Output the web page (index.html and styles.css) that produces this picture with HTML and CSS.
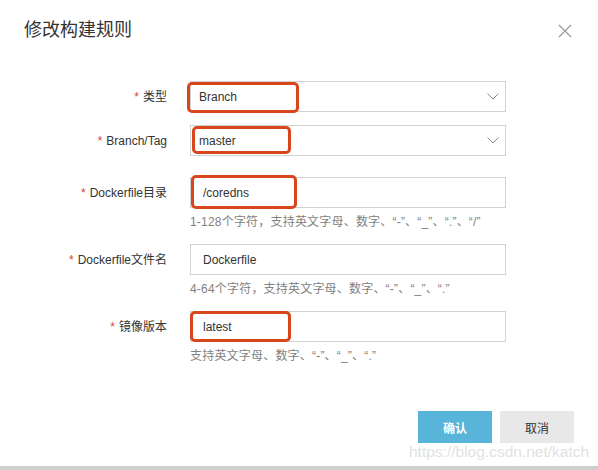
FILE: index.html
```html
<!DOCTYPE html>
<html lang="zh-CN">
<head>
<meta charset="utf-8">
<title>修改构建规则</title>
<link rel="stylesheet" href="styles.css">
</head>
<body>
<div class="dialog">
  <div class="header">
    <h2 class="title">修改构建规则</h2>
    <span class="close" aria-label="关闭">
      <svg width="14" height="14" viewBox="0 0 14 14"><path d="M1 1L13 13M13 1L1 13" stroke="#9a9a9a" stroke-width="1.2" fill="none"/></svg>
    </span>
  </div>
  <form class="form">
    <div class="row">
      <label class="label"><span class="req">*</span>类型</label>
      <div class="control">
        <div class="field select"><span>Branch</span>
          <svg class="arrow" width="12" height="7" viewBox="0 0 12 7"><path d="M0.5 0.5L6 6L11.5 0.5" stroke="#8a8a8a" stroke-width="1" fill="none"/></svg>
        </div>
        <span class="mark mark-1"></span>
      </div>
    </div>
    <div class="row row-wide">
      <label class="label"><span class="req">*</span>Branch/Tag</label>
      <div class="control">
        <div class="field select"><span>master</span>
          <svg class="arrow" width="12" height="7" viewBox="0 0 12 7"><path d="M0.5 0.5L6 6L11.5 0.5" stroke="#8a8a8a" stroke-width="1" fill="none"/></svg>
        </div>
        <span class="mark mark-2"></span>
      </div>
    </div>
    <div class="row">
      <label class="label"><span class="req">*</span>Dockerfile目录</label>
      <div class="control">
        <div class="field input">/coredns</div>
        <span class="mark mark-3"></span>
      </div>
      <div class="hint">1-128个字符，支持英文字母、数字、“-”、“_”、“.”、“/”</div>
    </div>
    <div class="row">
      <label class="label"><span class="req">*</span>Dockerfile文件名</label>
      <div class="control">
        <div class="field input">Dockerfile</div>
      </div>
      <div class="hint">4-64个字符，支持英文字母、数字、“-”、“_”、“.”</div>
    </div>
    <div class="row">
      <label class="label"><span class="req">*</span>镜像版本</label>
      <div class="control">
        <div class="field input">latest</div>
        <span class="mark mark-5"></span>
      </div>
      <div class="hint">支持英文字母、数字、“-”、“_”、“.”</div>
    </div>
  </form>
  <div class="footer">
    <button class="btn btn-primary" type="button">确认</button>
    <button class="btn btn-default" type="button">取消</button>
  </div>
  <div class="watermark">https://blog.csdn.net/katch</div>
</div>
</body>
</html>
```
FILE: styles.css
```css
* { box-sizing: border-box; }

html, body {
  margin: 0;
  padding: 0;
}

body {
  background: #cfcfcf;
  font-family: "Liberation Sans", "Noto Sans CJK SC", sans-serif;
  color: #333;
  width: 598px;
  height: 470px;
  overflow: hidden;
}

.dialog {
  position: relative;
  background: #fff;
  width: 598px;
  height: 466px;
  padding: 0 24px 0 0;
}

.header {
  display: flex;
  align-items: center;
  justify-content: space-between;
  padding: 19px 2px 0 24px;
  height: 41px;
}

.title {
  margin: 0;
  font-size: 18px;
  line-height: 22px;
  font-weight: normal;
  color: #333;
}

.close {
  display: flex;
  width: 14px;
  height: 14px;
  margin-top: 1px;
}

.form {
  margin: 40px 0 0 0;
}

.row {
  display: grid;
  grid-template-columns: 167px 316px;
  column-gap: 23px;
  margin-bottom: 13px;
}

.row-wide {
  margin-bottom: 21px;
}

.label {
  grid-column: 1;
  grid-row: 1;
  align-self: center;
  text-align: right;
  font-size: 12px;
  line-height: 16px;
  color: #333;
}

.req {
  color: #d9403a;
  margin-right: 4px;
}

.control {
  grid-column: 2;
  grid-row: 1;
  position: relative;
}

.field {
  height: 31px;
  border: 1px solid #d2d2d2;
  font-size: 12px;
  color: #333;
  display: flex;
  align-items: center;
  background: #fff;
}

.select {
  padding: 0 6px 0 8px;
  justify-content: space-between;
}

.input {
  padding: 0 12px;
}

.arrow {
  display: block;
}

.hint {
  grid-column: 2;
  grid-row: 2;
  margin-top: 5px;
  font-size: 12px;
  line-height: 18px;
  letter-spacing: 0.2px;
  color: #7f7f7f;
  white-space: nowrap;
}

.mark {
  position: absolute;
  border: 3px solid #d8461b;
  border-radius: 5px;
  pointer-events: none;
}

.mark-1 { left: -3px; top: 1px; width: 112px; height: 31px; }
.mark-2 { left: 2px; top: 1px; width: 99px; height: 28px; }
.mark-3 { left: 1px; top: -2px; width: 106px; height: 34px; }
.mark-5 { left: 0px; top: 0px; width: 101px; height: 31px; }

.footer {
  display: flex;
  justify-content: flex-end;
  gap: 8px;
  margin-top: 46px;
}

.btn {
  width: 74px;
  height: 32px;
  border: none;
  border-radius: 0;
  font-family: inherit;
  font-size: 12px;
  cursor: pointer;
  padding: 0;
}

.btn-primary {
  background: #58b4d9;
  color: #fff;
  font-weight: bold;
}

.btn-default {
  background: #e8e8e8;
  color: #333;
}

.watermark {
  position: absolute;
  left: 409px;
  top: 443px;
  font-size: 15.5px;
  line-height: 18px;
  color: #e2e2e2;
  white-space: nowrap;
}
```
